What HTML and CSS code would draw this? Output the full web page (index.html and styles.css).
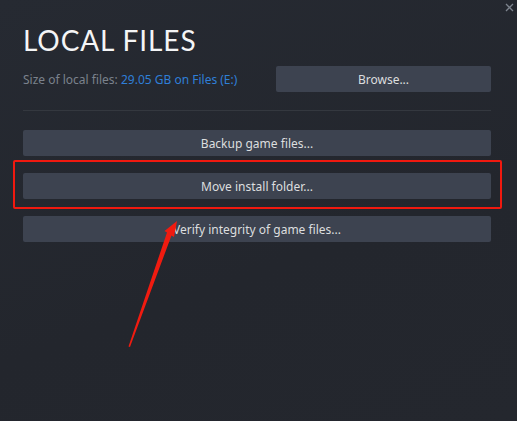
FILE: index.html
```html
<!DOCTYPE html>
<html>
<head>
<meta charset="utf-8">
<link rel="stylesheet" href="styles.css">
</head>
<body>
<div class="dialog">
  <svg class="close" width="9" height="9" viewBox="0 0 9 9"><path d="M1 1L8 8M8 1L1 8" stroke="#7d848e" stroke-width="1.3" fill="none"/></svg>
  <h1 class="title">LOCAL FILES</h1>
  <div class="info-row">
    <div class="size">Size of local files: <span class="size-val">29.05 GB on Files (E:)</span></div>
    <button class="btn browse">Browse...</button>
  </div>
  <div class="sep"></div>
  <div class="actions">
    <button class="btn">Backup game files...</button>
    <button class="btn">Move install folder...</button>
    <button class="btn">Verify integrity of game files...</button>
  </div>
  <div class="highlight"></div>
  <svg class="arrow" width="517" height="421" viewBox="0 0 517 421">
    <polygon points="177,221 174,237 171.5,235.5 130,347 128.5,346.5 167,232.5 164.5,231" fill="#f01b10"/>
  </svg>
</div>
</body>
</html>
```
FILE: styles.css
```css
html, body {
  margin: 0;
  padding: 0;
}
body {
  width: 517px;
  height: 421px;
  overflow: hidden;
  background: #24272e;
  font-family: "Noto Sans", "Open Sans", sans-serif;
}
.dialog {
  position: relative;
  box-sizing: border-box;
  width: 517px;
  height: 421px;
  padding: 0 26px 0 23px;
  background: linear-gradient(160deg, #262a32 0%, #23262d 60%, #24272e 100%);
}
.close {
  position: absolute;
  top: 3px;
  right: 3px;
}
.title {
  margin: 0;
  padding-top: 24px;
  font-family: Lato, "Noto Sans", sans-serif;
  font-weight: 400;
  font-size: 28px;
  line-height: 32px;
  letter-spacing: 0.9px;
  color: #f4f5f6;
}
.info-row {
  display: flex;
  align-items: center;
  justify-content: space-between;
  margin-top: 10px;
}
.size {
  font-size: 12px;
  color: #7b828c;
}
.size-val {
  color: #2f7fd8;
}
.btn {
  display: block;
  box-sizing: border-box;
  height: 26px;
  border: none;
  border-radius: 2px;
  background: #3d4350;
  color: #dcdedf;
  font-family: "Noto Sans", "Open Sans", sans-serif;
  font-size: 12px;
  padding: 0;
  text-align: center;
}
.browse {
  width: 215px;
}
.sep {
  margin-top: 18px;
  height: 1px;
  background: #34383f;
}
.actions {
  display: flex;
  flex-direction: column;
  gap: 17px;
  margin-top: 19px;
}
.actions .btn {
  width: 100%;
}
.highlight {
  position: absolute;
  left: 13px;
  top: 160px;
  width: 489px;
  height: 49px;
  box-sizing: border-box;
  border: 2px solid #f0190f;
  border-radius: 2px;
}
.arrow {
  position: absolute;
  left: 0;
  top: 0;
}
```
